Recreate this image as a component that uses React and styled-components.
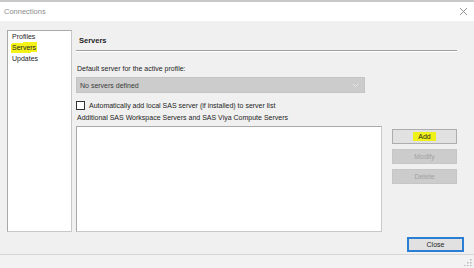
import React from "react"
import styled, { createGlobalStyle } from "styled-components"

const Global = createGlobalStyle`
  html, body {
    margin: 0;
    padding: 0;
    background: #f0f0f0;
  }
  body {
    font-family: "Liberation Sans", Arial, sans-serif;
    font-size: 7px;
    color: #1e1e1e;
  }
`

const Window = styled.div`
  width: 474px;
  height: 268px;
  display: flex;
  flex-direction: column;
  background: #f0f0f0;
  overflow: hidden;
`

const TopEdge = styled.div`
  height: 2px;
  background: #c9c9c9;
`

const TitleBar = styled.div`
  height: 19px;
  background: #fff;
  display: flex;
  align-items: center;
  justify-content: space-between;
  padding: 0 6px 0 4px;
  color: #8c8c8c;
  font-size: 7.5px;
`

const Body = styled.div`
  height: 211px;
  display: flex;
  gap: 4px;
  padding: 9px 17px 0 7px;
  box-sizing: border-box;
`

const NavList = styled.ul`
  list-style: none;
  margin: 0;
  padding: 0 0 0 3px;
  width: 67px;
  height: 202px;
  box-sizing: border-box;
  background: #fff;
  border: 1px solid #a9a9a9;
  border-right-color: #c8c8c8;
  border-bottom-color: #c8c8c8;
`

const NavItem = styled.li`
  line-height: 11px;
  height: 11px;
  width: fit-content;
  padding: 0 1px;
  color: #1e1e1e;
  ${({ $marked }) =>
    $marked &&
    `background: linear-gradient(175deg, transparent 0 12%, #f5f21a 12% 92%, transparent 92%);`}
`

const Content = styled.div`
  flex: 1;
  display: flex;
  flex-direction: column;
`

const Heading = styled.div`
  height: 21px;
  box-sizing: border-box;
  padding: 6px 0 0 3px;
  font-weight: bold;
  font-size: 7.5px;
  border-bottom: 1px solid #a0a0a0;
  box-shadow: 0 1px 0 #fff;
`

const Label = styled.div`
  line-height: 10px;
  padding-left: 1px;
  margin-top: ${({ $top }) => $top}px;
`

const Combo = styled.div`
  margin-top: 3px;
  width: 289px;
  height: 16px;
  box-sizing: border-box;
  background: #cccccc;
  border: 1px solid #c4c4c4;
  display: flex;
  align-items: center;
  justify-content: space-between;
  padding: 0 5px 0 3px;
  color: #3a3a3a;
`

const CheckRow = styled.label`
  margin-top: 7px;
  display: flex;
  align-items: center;
  gap: 4px;
  height: 10px;
`

const Box = styled.span`
  width: 9px;
  height: 9px;
  box-sizing: border-box;
  border: 1px solid #333;
  background: #fff;
`

const Lower = styled.div`
  margin-top: 3px;
  display: flex;
  gap: 10px;
`

const ServerList = styled.div`
  width: 306px;
  height: 106px;
  box-sizing: border-box;
  background: #fff;
  border: 1px solid #a9a9a9;
  border-right-color: #c8c8c8;
  border-bottom-color: #c8c8c8;
`

const ButtonCol = styled.div`
  padding-top: 3px;
  display: flex;
  flex-direction: column;
  gap: 5px;
`

const Button = styled.button`
  width: ${({ $w }) => $w || 65}px;
  height: 15px;
  box-sizing: border-box;
  margin: 0;
  padding: 0;
  font: inherit;
  font-size: 7px;
  border: 1px solid ${({ $disabled }) => ($disabled ? "#c6c6c6" : "#adadad")};
  background: ${({ $disabled }) => ($disabled ? "#cccccc" : "#e1e1e1")};
  color: ${({ $disabled }) => ($disabled ? "#a2a2a2" : "#1e1e1e")};
  ${({ $focus }) => $focus && `border: 2px solid #2a7fd4;`}
`

const Marker = styled.span`
  padding: 1px 5px;
  background: #f0f01a;
`

const Footer = styled.div`
  height: 23px;
  box-sizing: border-box;
  display: flex;
  justify-content: flex-end;
  padding: 5px 10px 0 0;
  border-bottom: 1px solid #d6d6d6;
`

const StatusBar = styled.div`
  flex: 1;
  background: #f2f2f2;
  display: flex;
  justify-content: flex-end;
  align-items: flex-end;
  padding: 0 2px 2px 0;
`

const CloseIcon = () => (
  <svg width="9" height="9" viewBox="0 0 9 9">
    <path d="M1 1L8 8M8 1L1 8" stroke="#8a8a8a" strokeWidth="0.9" />
  </svg>
)

const Chevron = () => (
  <svg width="7" height="5" viewBox="0 0 7 5">
    <path d="M1 1L3.5 3.5L6 1" stroke="#e8e8e8" strokeWidth="1" fill="none" />
  </svg>
)

const Grip = () => (
  <svg width="8" height="8" viewBox="0 0 8 8">
    {[[6, 1], [6, 4], [3, 4], [6, 7], [3, 7], [0, 7]].map(([x, y]) => (
      <rect key={`${x}-${y}`} x={x} y={y} width="1.5" height="1.5" fill="#b5b5b5" />
    ))}
  </svg>
)

export default function App() {
  return (
    <Window>
      <Global />
      <TopEdge />
      <TitleBar>
        <span>Connections</span>
        <CloseIcon />
      </TitleBar>
      <Body>
        <NavList>
          <NavItem>Profiles</NavItem>
          <NavItem $marked>Servers</NavItem>
          <NavItem>Updates</NavItem>
        </NavList>
        <Content>
          <Heading>Servers</Heading>
          <Label $top={13}>Default server for the active profile:</Label>
          <Combo>
            <span>No servers defined</span>
            <Chevron />
          </Combo>
          <CheckRow>
            <Box />
            <span>Automatically add local SAS server (if installed) to server list</span>
          </CheckRow>
          <Label $top={3}>Additional SAS Workspace Servers and SAS Viya Compute Servers</Label>
          <Lower>
            <ServerList />
            <ButtonCol>
              <Button><Marker>Add</Marker></Button>
              <Button $disabled>Modify</Button>
              <Button $disabled>Delete</Button>
            </ButtonCol>
          </Lower>
        </Content>
      </Body>
      <Footer>
        <Button $focus $w={57}>Close</Button>
      </Footer>
      <StatusBar>
        <Grip />
      </StatusBar>
    </Window>
  )
}
